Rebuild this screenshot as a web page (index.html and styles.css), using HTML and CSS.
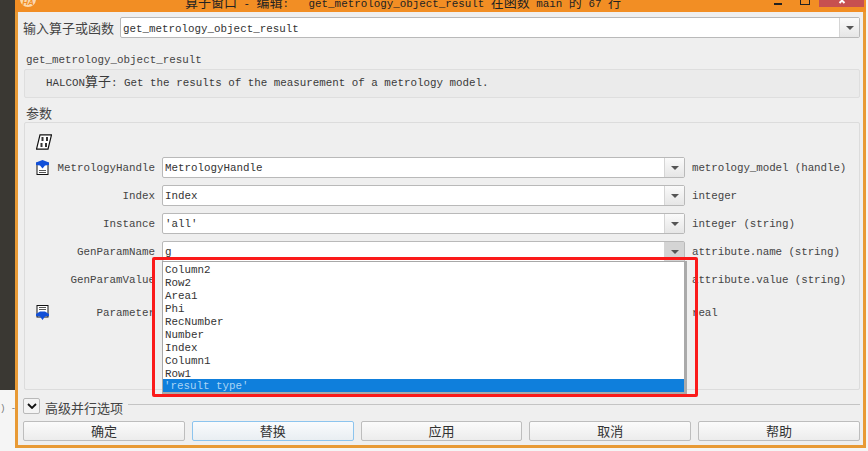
FILE: index.html
```html
<!DOCTYPE html>
<html lang="zh">
<head>
<meta charset="utf-8">
<title>算子窗口</title>
<link rel="stylesheet" href="styles.css">
</head>
<body>
<div class="screen">
  <div class="side">
    <div class="side-dark"></div>
    <div class="side-light">) -</div>
  </div>
  <div class="window">
    <div class="titlebar">
      <svg class="logo" width="16" height="12" viewBox="0 0 16 12"><circle cx="8" cy="-1" r="8" fill="#fbd9ae"/><text x="8" y="5" font-size="8" font-family="Liberation Sans" font-style="italic" font-weight="700" text-anchor="middle" fill="#f28e24">HA</text></svg>
      <div class="title"><span class="cjk">算子窗口</span> - <span class="cjk">编辑</span>:   get_metrology_object_result <span class="cjk">在函数</span> main <span class="cjk">的</span> 67 <span class="cjk">行</span></div>
      <div class="winbtns">
        <span class="wb-min"></span>
        <span class="wb-max"></span>
        <span class="wb-close"><svg width="12" height="7" viewBox="0 0 12 7"><path d="M2 -2 L7 3 M7 -2 L2 3" transform="translate(1.5 0)" stroke="#fff" stroke-width="2" fill="none"/></svg></span>
      </div>
    </div>
    <div class="content">
      <div class="oprow">
        <label class="oplabel">输入算子或函数</label>
        <div class="combo combo-wide"><span class="value">get_metrology_object_result</span><span class="arrow"></span></div>
      </div>
      <div class="opname">get_metrology_object_result</div>
      <div class="info">HALCON<span class="cjk">算子</span>: Get the results of the measurement of a metrology model.</div>
      <div class="grouptitle">参数</div>
      <div class="group">
        <svg class="grid-icon" width="16" height="16" viewBox="0 0 16 16"><path d="M4 .8 H15.5 L12 15.2 H.5 Z" fill="#fff" stroke="#111" stroke-width="1.2"/><path d="M5.5 3h2v4h-2zM10 3h2v4h-2zM4.5 9h2v4h-2zM9 9h2v4H9z" fill="#333"/></svg>
        <div class="row">
          <svg class="picon" width="13" height="15" viewBox="0 0 13 15"><rect x="1" y="3" width="11" height="11.5" fill="#fff" stroke="#111"/><path d="M3 10.5h7M3 12.5h7" stroke="#555"/><path d="M0 2.5 L6.5 0 13 2.5 V5 L9 5.5 6.5 8.5 4 5.5 0 5Z" fill="#1250d8"/></svg>
          <span class="plabel">MetrologyHandle</span>
          <div class="combo"><span class="value">MetrologyHandle</span><span class="arrow"></span></div>
          <span class="ptype">metrology_model (handle)</span>
        </div>
        <div class="row">
          <span class="picon-empty"></span>
          <span class="plabel">Index</span>
          <div class="combo"><span class="value">Index</span><span class="arrow"></span></div>
          <span class="ptype">integer</span>
        </div>
        <div class="row">
          <span class="picon-empty"></span>
          <span class="plabel">Instance</span>
          <div class="combo"><span class="value">'all'</span><span class="arrow"></span></div>
          <span class="ptype">integer (string)</span>
        </div>
        <div class="row">
          <span class="picon-empty"></span>
          <span class="plabel">GenParamName</span>
          <div class="combo"><span class="value">g</span><span class="arrow arrow-on"></span></div>
          <span class="ptype">attribute.name (string)</span>
        </div>
        <div class="row">
          <span class="picon-empty"></span>
          <span class="plabel">GenParamValue</span>
          <div class="combo"><span class="value"></span><span class="arrow"></span></div>
          <span class="ptype">attribute.value (string)</span>
        </div>
        <div class="row row-out">
          <svg class="picon" width="13" height="15" viewBox="0 0 13 15"><rect x="1" y=".5" width="11" height="11.5" fill="#fff" stroke="#111"/><path d="M3 2.5h7M3 4.5h7" stroke="#555"/><path d="M0 9 L4 6.5 H9 L13 9 V11 L9 11.5 6.5 15 4 11.5 0 11Z" fill="#1250d8"/></svg>
          <span class="plabel">Parameter</span>
          <div class="combo"><span class="value"></span><span class="arrow"></span></div>
          <span class="ptype">real</span>
        </div>
      </div>
      <div class="advanced">
        <button class="chev"><svg width="10" height="6" viewBox="0 0 10 6"><path d="M1 1 L5 5 L9 1" fill="none" stroke="#111" stroke-width="1.8"/></svg></button>
        <span class="advlabel">高级并行选项</span>
        <span class="advline"></span>
      </div>
      <div class="buttons">
        <button class="btn">确定</button>
        <button class="btn btn-focus">替换</button>
        <button class="btn">应用</button>
        <button class="btn">取消</button>
        <button class="btn">帮助</button>
      </div>
    </div>
  </div>
  <div class="popup">
    <div class="item">Column2</div>
    <div class="item">Row2</div>
    <div class="item">Area1</div>
    <div class="item">Phi</div>
    <div class="item">RecNumber</div>
    <div class="item">Number</div>
    <div class="item">Index</div>
    <div class="item">Column1</div>
    <div class="item">Row1</div>
    <div class="item item-sel">'result<span class="uscore">_</span>type'</div>
  </div>
  <div class="redbox"></div>
</div>
</body>
</html>
```
FILE: styles.css
```css
* { box-sizing: border-box; }
html, body { margin: 0; padding: 0; }
body { width: 868px; height: 451px; overflow: hidden; background: #f5f5f5; }
.screen {
  position: relative;
  display: flex;
  width: 868px;
  height: 451px;
  overflow: hidden;
  font-family: "Liberation Mono", "Noto Sans CJK SC", monospace;
  font-size: 10.85px;
  color: #3a3a3a;
}
.cjk { font-family: "Noto Sans CJK SC", sans-serif; font-size: 13px; line-height: 1; }
.side { width: 15px; flex: none; display: flex; flex-direction: column; }
.side-dark { height: 390px; background: #3a3833; }
.side-light { flex: 1; padding-top: 14px; font-size: 9px; color: #777; white-space: nowrap; overflow: hidden; }
.window {
  width: 851px;
  height: 448px;
  flex: none;
  display: flex;
  flex-direction: column;
  border: 3px solid #e89a35;
  border-top: 0;
  background: #efefef;
}
.titlebar {
  position: relative;
  height: 12px;
  flex: none;
  margin: 0 -3px;
  background: #f28e24;
  display: flex;
  overflow: hidden;
}
.logo { margin-left: 5px; flex: none; }
.title {
  position: absolute;
  left: 170px;
  top: -5px;
  line-height: 14px;
  color: #222;
  white-space: pre;
}
.winbtns { margin-left: auto; margin-right: 2px; display: flex; align-items: flex-start; }
.wb-min { width: 8px; height: 2px; margin-top: 3px; background: #222; }
.wb-max { width: 10px; height: 5px; margin: 0 9px 0 18px; border: 1.5px solid #222; border-top: 0; }
.wb-close { width: 45px; height: 7px; background: #c75050; display: flex; justify-content: center; }
.content { flex: 1; display: flex; flex-direction: column; padding: 5px 3px 0 6px; }
.oprow { display: flex; align-items: center; height: 21px; }
.oplabel {
  width: 96px; flex: none;
  margin-left: -1px;
  font-family: "Noto Sans CJK SC", sans-serif;
  font-size: 13px; color: #444;
}
.combo {
  flex: none;
  width: 523px;
  height: 21px;
  display: flex;
  background: #fff;
  border: 1px solid #b9b9b9;
  border-radius: 2px;
}
.combo-wide { width: 740px; margin-left: 1px; }
.value { flex: 1; padding: 2px 0 0 2px; line-height: 17px; color: #333; white-space: nowrap; overflow: hidden; }
.combo-wide .value { padding-top: 4px; line-height: 15px; }
.arrow {
  width: 20px; flex: none;
  border-left: 1px solid #d5d5d5;
  background: linear-gradient(#fafafa, #e6e6e6);
  position: relative;
}
.arrow::after {
  content: "";
  position: absolute;
  left: 6px; top: 8px;
  border: 4px solid transparent;
  border-top: 4px solid #555;
  border-bottom: 0;
}
.arrow-on { background: #d4d4d4; }
.opname { margin: 15px 0 0 2px; height: 14px; line-height: 14px; color: #444; }
.info {
  margin-top: 2px;
  height: 29px;
  padding-left: 21px;
  line-height: 27px;
  background: #ebebeb;
  border: 1px solid #dedede;
  border-radius: 2px;
  white-space: pre;
}
.grouptitle {
  margin: 6px 0 0 2px;
  height: 18px;
  line-height: 18px;
  font-family: "Noto Sans CJK SC", sans-serif;
  font-size: 13px;
  color: #444;
}
.group {
  height: 268px;
  border: 1px solid #dcdcdc;
  border-radius: 2px;
  padding: 11px 0 0 11px;
}
.grid-icon { display: block; margin-bottom: 7px; }
.row { display: flex; align-items: center; height: 21px; margin-bottom: 7px; }
.row-out { margin-top: 12px; }
.picon, .picon-empty { width: 13px; flex: none; display: block; }
.plabel { width: 106px; margin-right: 7px; flex: none; text-align: right; color: #444; white-space: nowrap; }
.ptype { margin-left: 7px; letter-spacing: -0.08px; color: #444; white-space: nowrap; }
.advanced { display: flex; align-items: center; height: 16px; margin: 8px 0 0 -1px; }
.chev {
  width: 17px; height: 16px; padding: 0;
  display: flex; align-items: center; justify-content: center;
  background: #f4f4f4;
  border: 1px solid #b9b9b9;
  border-radius: 2px;
}
.advlabel { margin-left: 5px; padding-top: 2px; font-family: "Noto Sans CJK SC", sans-serif; font-size: 13px; color: #444; }
.advline { flex: 1; height: 1px; margin: -4px 0 0 5px; background: #c4c4c4; }
.buttons { display: flex; gap: 7px; margin: 7px 0 0 -1px; }
.btn {
  width: 161.8px; height: 20px; padding: 0;
  font-family: "Noto Sans CJK SC", sans-serif;
  font-size: 13px; line-height: 16px; color: #333;
  background: linear-gradient(#fbfbfb, #ececec);
  border: 1px solid #bdbdbd;
  border-radius: 2px;
}
.btn-focus { border-color: #8cc4ee; background: linear-gradient(#f9fbfd, #e9eef2); }
.popup {
  position: absolute;
  left: 162px; top: 261px;
  width: 525px; height: 133px;
  padding-top: 2px;
  background: #fff;
  border-style: solid;
  border-width: 1px 3px 2px 1px;
  border-color: #a8a8a8 #aaa #aaa #a8a8a8;
}
.item { height: 13px; padding-left: 2px; line-height: 13px; color: #333; white-space: nowrap; }
.item-sel { margin-top: -2px; height: 13px; padding-left: 1px; line-height: 14px; background: #0f7fdc; color: #a9d4f5; overflow: hidden; }
.uscore { color: #0f7fdc; }
.redbox {
  position: absolute;
  left: 152px; top: 257px;
  width: 546px; height: 140px;
  border: 3px solid #fb1a1a;
  border-radius: 2px;
}
```
